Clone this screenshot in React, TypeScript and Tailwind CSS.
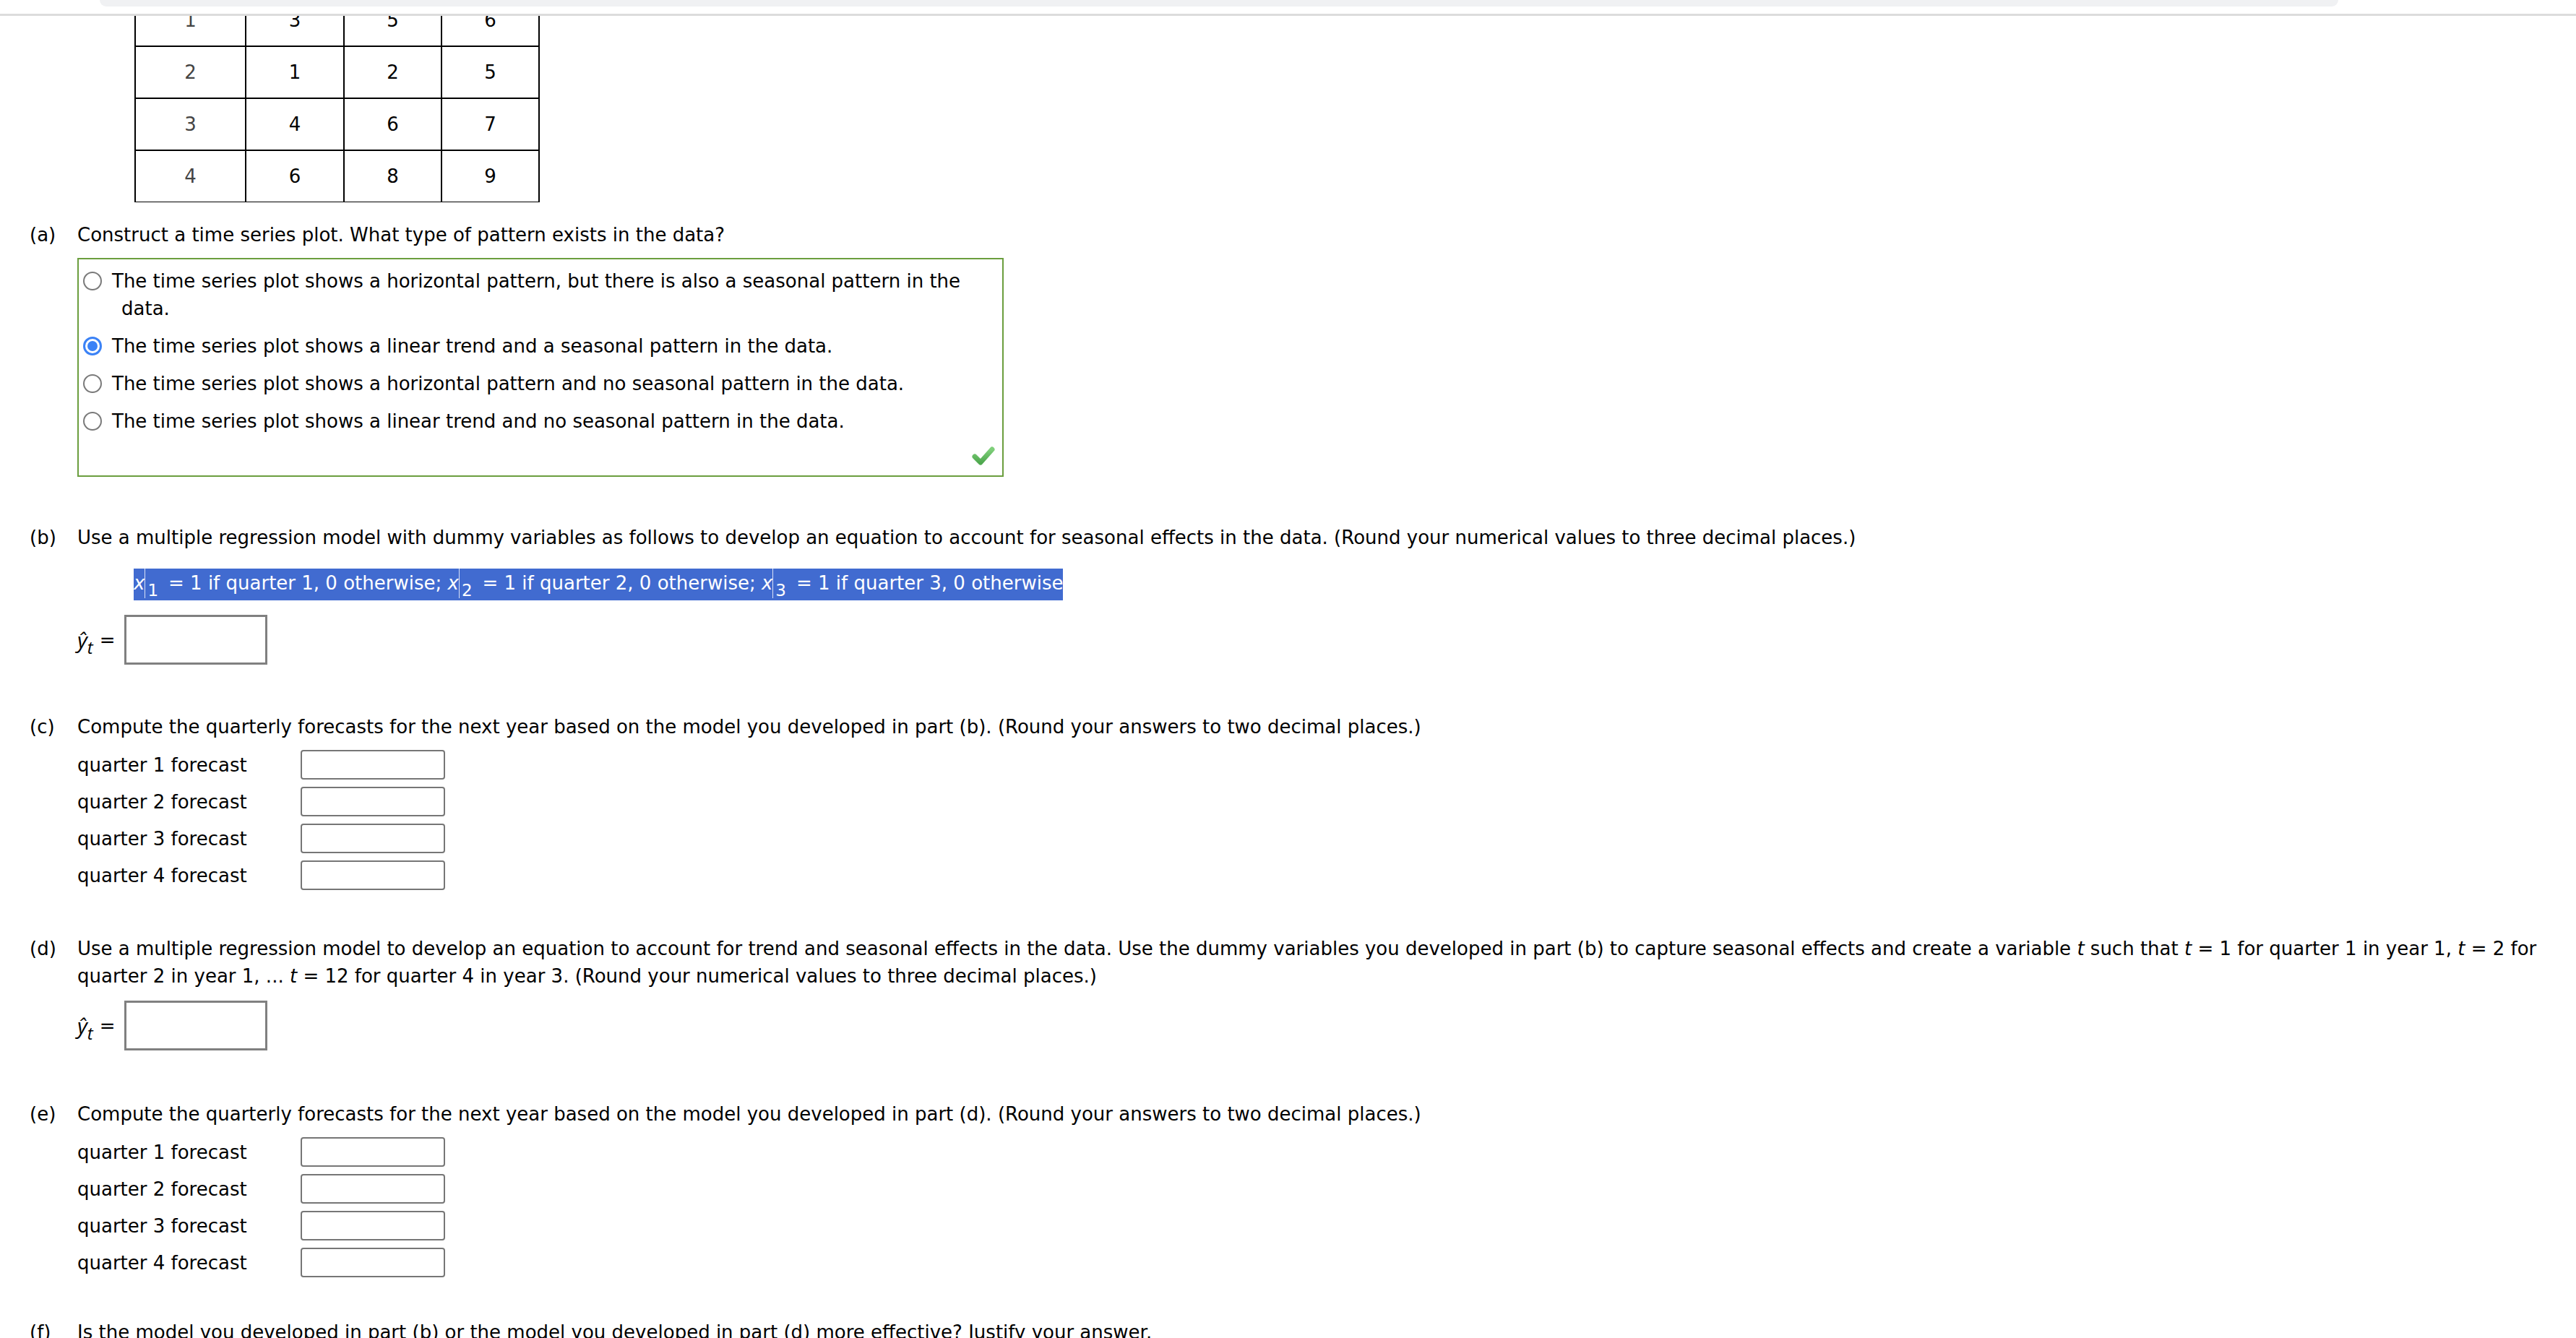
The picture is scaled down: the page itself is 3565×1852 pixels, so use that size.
import React from 'react';

const rows = [
  [1, 3, 5, 6],
  [2, 1, 2, 5],
  [3, 4, 6, 7],
  [4, 6, 8, 9],
];

const colWidths = ['w-[153px]', 'w-[136px]', 'w-[135px]', 'w-[135px]'];

function Radio({ checked }: { checked?: boolean }) {
  if (checked) {
    return (
      <span className="mt-[6px] flex h-[26px] w-[26px] shrink-0 items-center justify-center rounded-full border-[3px] border-[#3b82f6] bg-white">
        <span className="h-[14px] w-[14px] rounded-full bg-[#3b82f6]" />
      </span>
    );
  }
  return <span className="mt-[6px] h-[26px] w-[26px] shrink-0 rounded-full border-2 border-[#7a7a7a] bg-white" />;
}

function Part({ label, children }: { label: string; children: React.ReactNode }) {
  return (
    <div className="flex pl-[41px]">
      <div className="w-[66px] shrink-0">({label})</div>
      <div className="flex flex-col">{children}</div>
    </div>
  );
}

function YHat() {
  return (
    <div className="flex items-center">
      <span className="font-['Open_Sans',sans-serif] text-[30px] italic leading-[38px]">ŷ</span>
      <span className="mt-[20px] font-['Open_Sans',sans-serif] text-[24px] italic leading-none">t</span>
      <span className="ml-[9px] mr-[12px]">=</span>
      <div className="h-[69px] w-[198px] border-[3px] border-[#808080] bg-white" />
    </div>
  );
}

function Forecasts() {
  return (
    <div className="mt-[13px] flex flex-col gap-[10px]">
      {[1, 2, 3, 4].map(q => (
        <div key={q} className="flex items-center">
          <span className="w-[309px]">quarter {q} forecast</span>
          <div className="h-[41px] w-[200px] rounded-[4px] border-2 border-[#767676] bg-white" />
        </div>
      ))}
    </div>
  );
}

function Sub({ n }: { n: number }) {
  return <span className="relative top-[9px] pl-[3px] pr-[14px] text-[23px]">{n}</span>;
}

const options = [
  'The time series plot shows a linear trend and a seasonal pattern in the data.',
  'The time series plot shows a horizontal pattern and no seasonal pattern in the data.',
  'The time series plot shows a linear trend and no seasonal pattern in the data.',
];

export default function App() {
  return (
    <div className="min-h-screen w-full overflow-hidden bg-white font-['DejaVu_Sans',Verdana,sans-serif] text-[26px] leading-[38px] text-black">
      {/* top strip */}
      <div className="relative h-[19px]">
        <div className="ml-[138px] h-[9px] w-[3098px] rounded-b-[10px] bg-[#f0f1f3]" />
      </div>
      <div className="h-[3px] w-full bg-[#dcdcdc]" />

      {/* data table, scrolled under the header */}
      <div className="h-[258px] overflow-hidden">
        <table className="ml-[186px] mt-[-31px] border-collapse text-[26px]">
          <tbody>
            {rows.map((r, i) => (
              <tr key={i} className="h-[72px]">
                {r.map((v, j) => (
                  <td
                    key={j}
                    className={`${colWidths[j]} border-2 border-black text-center ${j === 0 ? 'text-[#444]' : 'text-black'}`}
                  >
                    {v}
                  </td>
                ))}
              </tr>
            ))}
          </tbody>
        </table>
      </div>

      <div className="mt-[26px]">
        <Part label="a">
          <div>Construct a time series plot. What type of pattern exists in the data?</div>
        </Part>
        <div className="ml-[107px] mt-[13px] flex h-[303px] w-[1282px] flex-col border-2 border-[#6b9e3e] pl-[6px] pr-[9px] pt-[11px] pb-[13px]">
          <div className="flex flex-col gap-[14px]">
            <div className="flex gap-[14px]">
              <Radio />
              <div>
                The time series plot shows a horizontal pattern, but there is also a seasonal pattern in the
                <br />
                <span className="pl-[13px]">data.</span>
              </div>
            </div>
            {options.map((o, i) => (
              <div key={o} className="flex gap-[14px]">
                <Radio checked={i === 0} />
                <div>{o}</div>
              </div>
            ))}
          </div>
          <div className="mt-auto flex justify-end">
            <svg width="34" height="28" viewBox="0 0 34 28">
              <defs>
                <linearGradient id="chk" x1="0" y1="0" x2="0" y2="1">
                  <stop offset="0" stopColor="#7fcf7a" />
                  <stop offset="1" stopColor="#4fa84f" />
                </linearGradient>
              </defs>
              <path d="M5 15 L13 23 L29 5" fill="none" stroke="url(#chk)" strokeWidth="7" strokeLinecap="round" strokeLinejoin="round" />
            </svg>
          </div>
        </div>
      </div>

      <div className="mt-[65px]">
        <Part label="b">
          <div>
            Use a multiple regression model with dummy variables as follows to develop an equation to account for seasonal effects in the data. (Round your numerical values to three decimal places.)
          </div>
          <div className="ml-[78px] mt-[24px] flex h-[44px] w-fit items-start bg-[#416bd0] leading-[40px] text-white">
            <span className="italic">x</span>
            <span className="border-l-[1.5px] border-white/80">
              <Sub n={1} />= 1 if quarter 1, 0 otherwise; <span className="italic">x</span>
            </span>
            <span className="border-l-[1.5px] border-white/80">
              <Sub n={2} />= 1 if quarter 2, 0 otherwise; <span className="italic">x</span>
            </span>
            <span className="border-l-[1.5px] border-white/80">
              <Sub n={3} />= 1 if quarter 3, 0 otherwise
            </span>
          </div>
          <div className="mt-[20px]">
            <YHat />
          </div>
        </Part>
      </div>

      <div className="mt-[67px]">
        <Part label="c">
          <div>
            Compute the quarterly forecasts for the next year based on the model you developed in part (b). (Round your answers to two decimal places.)
          </div>
          <Forecasts />
        </Part>
      </div>

      <div className="mt-[62px]">
        <Part label="d">
          <div className="whitespace-nowrap">
            Use a multiple regression model to develop an equation to account for trend and seasonal effects in the data. Use the dummy variables you developed in part (b) to capture seasonal effects and create a variable <i>t</i> such that <i>t</i> = 1 for quarter 1 in year 1, <i>t</i> = 2 for
            <br />
            quarter 2 in year 1, ... <i>t</i> = 12 for quarter 4 in year 3. (Round your numerical values to three decimal places.)
          </div>
          <div className="mt-[15px]">
            <YHat />
          </div>
        </Part>
      </div>

      <div className="mt-[69px]">
        <Part label="e">
          <div>
            Compute the quarterly forecasts for the next year based on the model you developed in part (d). (Round your answers to two decimal places.)
          </div>
          <Forecasts />
        </Part>
      </div>

      <div className="mt-[57px]">
        <Part label="f">
          <div>Is the model you developed in part (b) or the model you developed in part (d) more effective? Justify your answer.</div>
        </Part>
      </div>
    </div>
  );
}
